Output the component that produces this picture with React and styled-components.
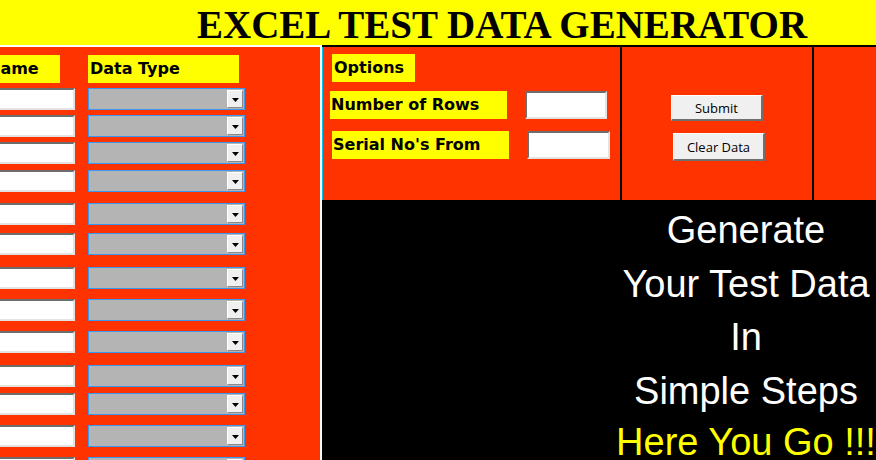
import React from "react";
import styled, { createGlobalStyle } from "styled-components";

const GlobalStyle = createGlobalStyle`
  html, body {
    margin: 0;
    padding: 0;
    background: #000;
  }
`;

const Page = styled.div`
  width: 876px;
  height: 460px;
  overflow: hidden;
  display: flex;
  flex-direction: column;
  background: #000;
`;

const Header = styled.div`
  height: 45px;
  flex: none;
  background: #ffff00;
  padding-left: 197px;
  box-sizing: border-box;
  overflow: hidden;
`;

const Title = styled.h1`
  margin: 0;
  padding-top: 4px;
  font-family: "Liberation Serif", "Times New Roman", serif;
  font-weight: bold;
  font-size: 39px;
  line-height: 41px;
  color: #000;
  white-space: nowrap;
`;

const Body = styled.div`
  flex: 1;
  display: flex;
  min-height: 0;
`;

const FieldPanel = styled.div`
  width: 322px;
  flex: none;
  box-sizing: border-box;
  background: #ff3300;
  border-top: 2px solid #fff;
  border-right: 2px solid #fff;
  overflow: hidden;
  padding-top: 8px;
`;

const FieldList = styled.div`
  margin-left: -40px;
  display: flex;
  flex-direction: column;
`;

const HeadRow = styled.div`
  display: flex;
  gap: 28px;
`;

const Label = styled.div`
  height: 28px;
  width: ${(p) => p.$width}px;
  margin-left: ${(p) => p.$indent || 0}px;
  padding-left: ${(p) => p.$pad || 2}px;
  box-sizing: border-box;
  background: #ffff00;
  color: #000;
  font-family: "Comic Sans MS", "DejaVu Sans", sans-serif;
  font-weight: bold;
  font-size: 16px;
  line-height: 28px;
  white-space: nowrap;
  flex: none;
`;

const FieldRow = styled.div`
  display: flex;
  gap: 13px;
  margin-top: ${(p) => p.$gap}px;
`;

const TextBox = styled.div`
  width: ${(p) => p.$width}px;
  height: ${(p) => p.$height}px;
  box-sizing: border-box;
  background: #fff;
  border-top: 2px solid #6d6d6d;
  border-left: 2px solid #6d6d6d;
  border-bottom: 2px solid #e3e3e3;
  border-right: 2px solid #e3e3e3;
  flex: none;
`;

const Combo = styled.div`
  width: 157px;
  height: 22px;
  box-sizing: border-box;
  background: #b4b4b4;
  border: 1px solid #3a98f0;
  padding: 1px;
  display: flex;
  justify-content: flex-end;
  flex: none;
`;

const DropButton = styled.div`
  width: 16px;
  height: 100%;
  box-sizing: border-box;
  background: #f0f0f0;
  border-top: 1px solid #fff;
  border-left: 1px solid #fff;
  border-right: 1px solid #8a8a8a;
  border-bottom: 1px solid #8a8a8a;
  display: flex;
  align-items: center;
  justify-content: center;
  padding-top: 2px;
`;

const Main = styled.div`
  flex: 1;
  display: flex;
  flex-direction: column;
  border-top: 2px solid #000;
  background: #000;
  min-width: 0;
`;

const TopRow = styled.div`
  height: 153px;
  display: flex;
  flex: none;
`;

const OptionsCell = styled.div`
  width: 300px;
  box-sizing: border-box;
  background: #ff3300;
  border-left: 1px solid #00c0f0;
  border-right: 2px solid #000;
  padding-top: 7px;
  display: flex;
  flex-direction: column;
`;

const OptionRow = styled.div`
  display: flex;
  align-items: center;
  gap: 18px;
  margin-top: ${(p) => p.$gap}px;
  margin-left: ${(p) => p.$indent}px;
`;

const ButtonCell = styled.div`
  width: 192px;
  box-sizing: border-box;
  background: #ff3300;
  border-right: 2px solid #000;
  padding-top: 48px;
  display: flex;
  flex-direction: column;
  align-items: center;
  gap: 12px;
`;

const SpareCell = styled.div`
  flex: 1;
  background: #ff3300;
`;

const Button = styled.button`
  width: 92px;
  height: ${(p) => p.$height}px;
  margin-left: ${(p) => p.$shift || 0}px;
  box-sizing: border-box;
  background: #f0f0f0;
  border: none;
  border-top: 1px solid #fff;
  border-left: 1px solid #fff;
  border-right: 2px solid #707070;
  border-bottom: 2px solid #707070;
  font-family: "Open Sans", "Noto Sans", sans-serif;
  font-size: 13px;
  color: #000;
  padding: 0;
  cursor: pointer;
`;

const Banner = styled.div`
  flex: 1;
  display: flex;
  justify-content: flex-end;
  background: #000;
  padding-top: 4px;
`;

const Slogan = styled.div`
  width: 260px;
  text-align: center;
  font-family: "Liberation Sans", Arial, sans-serif;
  font-size: 38px;
  line-height: 53.5px;
  white-space: nowrap;
`;

const SloganLine = styled.div`
  color: ${(p) => (p.$accent ? "#ffff00" : "#fff")};
  margin-top: ${(p) => (p.$accent ? -2 : 0)}px;
`;

const rowGaps = [5, 5, 5, 6, 11, 8, 12, 10, 10, 12, 6, 10, 10];

const Arrow = () => (
  <svg width="7" height="4" viewBox="0 0 7 4">
    <polygon points="0,0 7,0 3.5,4" fill="#000" />
  </svg>
);

export default function App() {
  return (
    <>
      <GlobalStyle />
      <Page>
        <Header>
          <Title>EXCEL TEST DATA GENERATOR</Title>
        </Header>
        <Body>
          <FieldPanel>
            <FieldList>
              <HeadRow>
                <Label $width={100} $pad={27}>Name</Label>
                <Label $width={151}>Data Type</Label>
              </HeadRow>
              {rowGaps.map((gap, i) => (
                <FieldRow key={i} $gap={gap}>
                  <TextBox $width={115} $height={22} />
                  <Combo>
                    <DropButton>
                      <Arrow />
                    </DropButton>
                  </Combo>
                </FieldRow>
              ))}
            </FieldList>
          </FieldPanel>
          <Main>
            <TopRow>
              <OptionsCell>
                <Label $width={83} $indent={9}>Options</Label>
                <OptionRow $gap={9} $indent={7}>
                  <Label $width={177} $pad={1}>Number of Rows</Label>
                  <TextBox $width={82} $height={28} />
                </OptionRow>
                <OptionRow $gap={12} $indent={9}>
                  <Label $width={177} $pad={1}>Serial No's From</Label>
                  <TextBox $width={83} $height={28} />
                </OptionRow>
              </OptionsCell>
              <ButtonCell>
                <Button $height={26}>Submit</Button>
                <Button $height={28} $shift={4}>Clear Data</Button>
              </ButtonCell>
              <SpareCell />
            </TopRow>
            <Banner>
              <Slogan>
                <SloganLine>Generate</SloganLine>
                <SloganLine>Your Test Data</SloganLine>
                <SloganLine>In</SloganLine>
                <SloganLine>Simple Steps</SloganLine>
                <SloganLine $accent>Here You Go !!!</SloganLine>
              </Slogan>
            </Banner>
          </Main>
        </Body>
      </Page>
    </>
  );
}
